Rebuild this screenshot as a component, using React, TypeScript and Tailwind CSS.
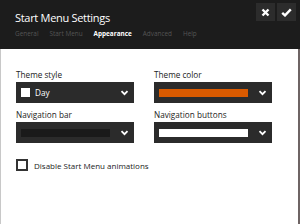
import React from "react";

const Chevron = () => (
  <svg width="9" height="6" viewBox="0 0 9 6" className="shrink-0">
    <path d="M1.5 1.2 L4.5 4.2 L7.5 1.2" stroke="#ffffff" strokeWidth="1.8" fill="none" />
  </svg>
);

const Select = ({ children }: { children: React.ReactNode }) => (
  <div className="flex h-[21px] w-[118px] items-center bg-[#2b2b2b] pl-[5px] pr-[5px]">
    <div className="flex flex-1 items-center">{children}</div>
    <Chevron />
  </div>
);

export default function App() {
  const font = { fontFamily: '"Open Sans", "Noto Sans", sans-serif' };
  return (
    <div className="flex h-[224px] w-[300px] flex-col bg-white" style={font}>
      <div className="flex h-[49px] bg-[#1c1c1c]">
        <div className="flex flex-1 flex-col pl-[15px] pt-[11px]">
          <div className="text-[11px] leading-[14px] tracking-[-0.3px] text-white">Start Menu Settings</div>
          <div className="mt-[4px] flex gap-[11px] text-[6.4px] leading-[9px] text-[#555555]">
            <span>General</span>
            <span>Start Menu</span>
            <span className="font-bold text-white">Appearance</span>
            <span>Advanced</span>
            <span>Help</span>
          </div>
        </div>
        <div className="flex gap-[2px] pr-[4px] pt-[3px]">
          <div className="flex h-[18px] w-[19px] items-center justify-center bg-[#2c2c2c]">
            <svg width="9" height="9" viewBox="0 0 9 9">
              <path d="M1.5 1.5 L7.5 7.5 M7.5 1.5 L1.5 7.5" stroke="#fff" strokeWidth="2.4" />
            </svg>
          </div>
          <div className="flex h-[18px] w-[19px] items-center justify-center bg-[#2c2c2c]">
            <svg width="11" height="9" viewBox="0 0 11 9">
              <path d="M1.2 4.8 L4 7.4 L9.8 1.4" stroke="#fff" strokeWidth="2.4" fill="none" />
            </svg>
          </div>
        </div>
      </div>
      <div className="flex flex-1 flex-col border-l border-l-[#c8c8c8] border-r-2 border-r-[#6e6464] pl-[15px] pt-[20px]">
        <div className="grid grid-cols-[118px_118px] gap-x-[20px]">
          <div className="flex flex-col">
            <div className="mb-[2px] text-[8.2px] leading-[11px] text-[#222]">Theme style</div>
            <Select>
              <div className="h-[9px] w-[9px] bg-white" />
              <span className="ml-[5px] text-[8.2px] leading-[11px] text-white">Day</span>
            </Select>
          </div>
          <div className="flex flex-col">
            <div className="mb-[2px] text-[8.2px] leading-[11px] text-[#222]">Theme color</div>
            <Select>
              <div className="h-[8px] w-[89px] bg-[#d95a00]" />
            </Select>
          </div>
          <div className="mt-[6px] flex flex-col">
            <div className="mb-[2px] text-[8.2px] leading-[11px] text-[#222]">Navigation bar</div>
            <Select>
              <div className="h-[8px] w-[89px] bg-[#1a1a1a]" />
            </Select>
          </div>
          <div className="mt-[6px] flex flex-col">
            <div className="mb-[2px] text-[8.2px] leading-[11px] text-[#222]">Navigation buttons</div>
            <Select>
              <div className="h-[8px] w-[89px] bg-white" />
            </Select>
          </div>
        </div>
        <div className="mt-[16px] flex items-center">
          <div className="h-[12px] w-[12px] border-2 border-[#333]" />
          <span className="ml-[6px] text-[8px] leading-[11px] text-[#222]">Disable Start Menu animations</span>
        </div>
      </div>
    </div>
  );
}
